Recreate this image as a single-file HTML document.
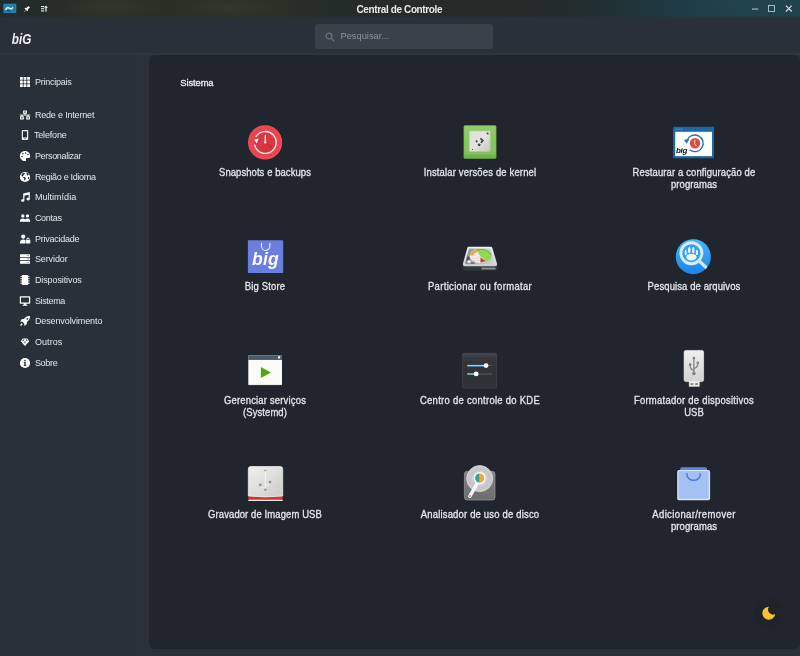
<!DOCTYPE html>
<html lang="pt-BR">
<head>
<meta charset="utf-8">
<title>Central de Controle</title>
<style>
*{box-sizing:border-box;margin:0;padding:0}
html,body{width:800px;height:656px;overflow:hidden;background:#29303a}
body{position:relative;font-family:"Liberation Sans",sans-serif;color:#e6e8ec;-webkit-font-smoothing:antialiased}
.abs{position:absolute}
#titlebar{left:0;top:0;width:800px;height:18px;
 background:
  radial-gradient(ellipse 60px 13px at 110px 7px,rgba(62,70,46,.36),rgba(62,70,46,0) 100%),
  radial-gradient(ellipse 65px 13px at 230px 7px,rgba(62,70,46,.36),rgba(62,70,46,0) 100%),
  linear-gradient(90deg,#1f2c2b 0px,#252c28 45px,#292e27 80px,#2a2f27 280px,#232b29 340px,#252b28 470px,#232b2a 560px,#203237 620px,#1f3c45 680px,#1f424d 740px,#20444f 800px);}
#titlebar:after{content:"";position:absolute;left:0;right:0;bottom:0;height:3px;background:linear-gradient(180deg,rgba(41,48,58,0),rgba(41,48,58,.85))}
#title{left:-.7px;width:800px;top:2.700px;height:14px;line-height:14px;text-align:center;font-weight:bold;font-size:10px;letter-spacing:-.37px;color:#e9ebe8}
#header{left:0;top:18px;width:800px;height:37px;background:#29303a;border-bottom:2px solid #2f343f}
#search{left:315px;top:24px;width:178.300px;height:25px;background:#3a414b;border-radius:3px}
#search span{position:absolute;left:25.500px;top:0;line-height:25px;font-size:9.3px;color:#8d939e}
#sidebar{left:0;top:55px;width:800px;height:601px;background:#29303a}
.nav{position:absolute;left:0;width:148px;height:14px;line-height:14px;font-size:9px;letter-spacing:-.3px;color:#e4e7ec;white-space:nowrap}
.nav svg{position:absolute;left:19px;top:1px;width:12px;height:12px;fill:#fff}
.nav span{position:absolute;left:35px;top:0}
#main{left:149px;top:55px;width:651px;height:594px;background:#21252d;border-radius:6px 7px 7px 6px}
#h1{left:180.300px;top:75.800px;height:14px;line-height:14px;font-size:9.400px;color:#eceef2;letter-spacing:-.1px;-webkit-text-stroke:.3px #eceef2}
.lbl{position:absolute;width:214px;text-align:center;font-size:10.300px;line-height:12px;color:#e3e6ea;-webkit-text-stroke:.3px #e3e6ea;transform:scaleX(.92);transform-origin:50% 50%;white-space:nowrap}
.ico{position:absolute}
</style>
</head>
<body>
<div id="root" class="abs" style="left:0;top:0;width:800px;height:656px;will-change:transform;transform:translateZ(0)">
<div id="titlebar" class="abs"></div>
<div id="title" class="abs">Central de Controle</div>

<!-- titlebar icons -->
<svg class="abs" style="left:0;top:0" width="60" height="18" viewBox="0 0 60 18">
 <rect x="3.800" y="4" width="12.200" height="8.800" fill="#2780ab"/>
 <rect x="3.800" y="4" width="12.200" height="8.800" fill="none" stroke="#2f93bd" stroke-width=".6" opacity=".8"/>
 <path d="M10.500 6.500h4.500v4.500h-3.500z" fill="#1f6f9c" opacity=".8"/>
 <path d="M5.800 9.300Q7.500 6.800 9.600 8.300T12.600 7.600" stroke="#eaf6fb" stroke-width="1.500" fill="none" opacity=".9" stroke-linecap="round"/>
 <path d="M6.800 10.700h3.600" stroke="#123f5c" stroke-width="1.100"/>
 <g fill="#f2f2f2" transform="translate(27.300 9) scale(.86) translate(-27.300 -8)"><path d="M28.600 4.600l2 2-1 .3-1.600 1.600.1 1.400-.7.700-1.500-1.500-2 2.300-.3-.3 2-2.300-1.500-1.500.7-.7 1.400.1 1.600-1.600z"/></g>
 <g fill="#e9e9e9"><rect x="41" y="6" width="3.200" height="1.100"/><rect x="41" y="8.200" width="3.200" height="1.100"/><rect x="41" y="10.400" width="3.200" height="1.100"/><path d="M46 5.600l2 2.200h-1.400v4h-1.200v-4H44z"/></g>
</svg>
<svg class="abs" style="left:740px;top:0" width="60" height="18" viewBox="0 0 60 18">
 <rect x="12" y="8.500" width="6" height="1.100" fill="#a9c0c8"/>
 <rect x="28.500" y="5.500" width="6" height="6" fill="none" stroke="#a3bbc3" stroke-width="1"/>
 <path d="M45.900 5.700l5.800 5.800M51.700 5.700l-5.800 5.800" stroke="#d8e3e6" stroke-width="1.100"/>
</svg>

<div id="header" class="abs"></div>
<svg class="abs" style="left:10px;top:28px" width="26" height="22" viewBox="0 0 26 22"><text x="1.800" y="16.300" font-family="Liberation Sans, sans-serif" font-size="14.500" font-weight="bold" font-style="italic" fill="#f1f1f4" textLength="19.500" lengthAdjust="spacingAndGlyphs">biG</text></svg>
<div id="search" class="abs">
 <svg style="position:absolute;left:10px;top:7.5px" width="10" height="10" viewBox="0 0 10 10"><circle cx="4" cy="4" r="2.9" fill="none" stroke="#68707d" stroke-width="1.2"/><path d="M6.2 6.2L8.8 8.8" stroke="#68707d" stroke-width="1.400" stroke-linecap="round"/></svg>
 <span>Pesquisar...</span>
</div>

<div id="sidebar" class="abs"></div>
<div class="abs" style="left:138px;top:55px;width:11px;height:601px;background:#2c303b"></div>
<div id="main" class="abs"></div>
<div id="h1" class="abs">Sistema</div>

<div class="nav" style="top:74.70px"><svg viewBox="0 0 12 12"><g><rect x="1.0" y="1.0" width="2.8" height="2.8" rx=".3"/><rect x="4.6" y="1.0" width="2.8" height="2.8" rx=".3"/><rect x="8.2" y="1.0" width="2.8" height="2.8" rx=".3"/><rect x="1.0" y="4.6" width="2.8" height="2.8" rx=".3"/><rect x="4.6" y="4.6" width="2.8" height="2.8" rx=".3"/><rect x="8.2" y="4.6" width="2.8" height="2.8" rx=".3"/><rect x="1.0" y="8.2" width="2.8" height="2.8" rx=".3"/><rect x="4.6" y="8.2" width="2.8" height="2.8" rx=".3"/><rect x="8.2" y="8.2" width="2.8" height="2.8" rx=".3"/></g></svg><span style="left:35.1px;letter-spacing:-0.25px">Principais</span></div>
<div class="nav" style="top:107.60px"><svg viewBox="0 0 12 12"><rect x="4.100" y="1.500" width="3.800" height="3.300" rx=".5"/><rect x="5.200" y="2.500" width="1.600" height="1.100" fill="#29303a"/><rect x="1" y="7.300" width="3.800" height="3.300" rx=".5"/><rect x="2.100" y="8.300" width="1.600" height="1.100" fill="#29303a"/><rect x="7.200" y="7.300" width="3.800" height="3.300" rx=".5"/><rect x="8.300" y="8.300" width="1.600" height="1.100" fill="#29303a"/><rect x="5.550" y="4.600" width=".9" height="1.600"/><rect x=".8" y="5.600" width="10.400" height=".9"/><rect x="2.450" y="6" width=".9" height="1.500"/><rect x="8.650" y="6" width=".9" height="1.500"/></svg><span style="left:34.9px;letter-spacing:-0.18px">Rede e Internet</span></div>
<div class="nav" style="top:128.25px"><svg viewBox="0 0 12 12"><path fill-rule="evenodd" d="M3.8 1h4.4a1 1 0 0 1 1 1v8a1 1 0 0 1-1 1H3.8a1 1 0 0 1-1-1V2a1 1 0 0 1 1-1zM3.9 2.2v6.3h4.2V2.2zM6 9.1a.6.6 0 1 0 0 1.2.6.6 0 0 0 0-1.2z"/></svg><span style="left:33.9px;letter-spacing:-0.16px">Telefone</span></div>
<div class="nav" style="top:148.90px"><svg viewBox="0 0 12 12"><path fill-rule="evenodd" d="M6 1C3.1 1 .9 3.200.9 6s2.300 5.100 5.100 5.100c.9 0 1.300-.7 1-1.400-.4-.9.1-1.700 1.100-1.700h1.400c1 0 1.700-.8 1.700-1.800C11.200 3.200 8.900 1 6 1zM3 7.300a.8.800 0 1 1 0-1.600.8.800 0 0 1 0 1.600zM3.900 4.600a.8.800 0 1 1 0-1.600.8.800 0 0 1 0 1.600zM6.600 3.800a.8.800 0 1 1 0-1.600.8.800 0 0 1 0 1.600zM9 5.300a.8.800 0 1 1 0-1.600.8.800 0 0 1 0 1.600z"/></svg><span style="left:34.9px;letter-spacing:-0.31px">Personalizar</span></div>
<div class="nav" style="top:169.60px"><svg viewBox="0 0 12 12"><circle cx="6" cy="6" r="5.1"/><path fill="#29303a" d="M3.300 2.400l1.500-.7 1.200.4-.4.900-1 .4.300.8-.9.600-.2 1 1 .3 1.300.2.800.9-.5 1.200-.9 1.100-.5-1.300-.2-1.300-1-.7-.6-1.200-.8-.3.300-1.300zM7.800 1.600l1.400.9.900 1.200-.9.100-.4.800-.9-.3.200-.9-.7-.5zM9.200 6l1.100.2-.2 1.300-.9 1-.3-1.100z"/></svg><span style="left:34.9px;letter-spacing:-0.32px">Região e Idioma</span></div>
<div class="nav" style="top:190.25px"><svg viewBox="0 0 12 12"><path d="M4.200 2.600L10.800 1v7.100a1.700 1.300 0 1 1-1.200-1.250V3.700L5.400 4.800v4.700a1.700 1.300 0 1 1-1.200-1.250z"/></svg><span style="left:34.9px;letter-spacing:0.03px">Multimídia</span></div>
<div class="nav" style="top:210.90px"><svg viewBox="0 0 12 12"><circle cx="3.800" cy="3.900" r="1.700"/><circle cx="8.500" cy="3.900" r="1.700"/><path d="M.9 9.400c0-1.700 1-2.900 2.900-2.900 1 0 1.800.4 2.300 1 .5-.6 1.300-1 2.400-1 1.800 0 2.700 1.200 2.700 2.900v.3H.9z"/></svg><span style="left:34.9px;letter-spacing:-0.27px">Contas</span></div>
<div class="nav" style="top:231.55px"><svg viewBox="0 0 12 12"><circle cx="4.200" cy="3.600" r="2.100"/><path d="M.8 10.200c0-2.200 1.200-3.800 3.400-3.800.9 0 1.600.3 2.100.7v3.400H.8z"/><path fill-rule="evenodd" d="M7.100 6.900h.4v-.8a1.500 1.500 0 0 1 3 0v.8h.4a.4.400 0 0 1 .4.400v2.800a.4.400 0 0 1-.4.400H7.100a.4.400 0 0 1-.4-.4V7.300a.4.400 0 0 1 .4-.4zM8.300 6.900h1.400v-.8a.7.700 0 0 0-1.400 0z"/></svg><span style="left:34.9px;letter-spacing:-0.25px">Privacidade</span></div>
<div class="nav" style="top:252.20px"><svg viewBox="0 0 12 12"><rect x="1" y="1.300" width="10" height="2.700" rx=".5"/><rect x="1" y="4.650" width="10" height="2.700" rx=".5"/><rect x="1" y="8" width="10" height="2.700" rx=".5"/><g fill="#29303a"><circle cx="9.500" cy="2.650" r=".45"/><circle cx="8.100" cy="2.650" r=".45"/><circle cx="9.500" cy="6" r=".45"/><circle cx="8.100" cy="6" r=".45"/><circle cx="9.500" cy="9.350" r=".45"/><circle cx="8.100" cy="9.350" r=".45"/></g></svg><span style="left:34.9px;letter-spacing:-0.10px">Servidor</span></div>
<div class="nav" style="top:272.85px"><svg viewBox="0 0 12 12"><rect x="2.900" y=".9" width="6.200" height="10.200" rx="1"/><g><rect x="1.500" y="2.200" width="1.800" height=".8"/><rect x="1.500" y="4" width="1.800" height=".8"/><rect x="1.500" y="5.800" width="1.800" height=".8"/><rect x="1.500" y="7.600" width="1.800" height=".8"/><rect x="1.500" y="9.200" width="1.800" height=".8"/><rect x="8.700" y="2.200" width="1.800" height=".8"/><rect x="8.700" y="4" width="1.800" height=".8"/><rect x="8.700" y="5.800" width="1.800" height=".8"/><rect x="8.700" y="7.600" width="1.800" height=".8"/><rect x="8.700" y="9.200" width="1.800" height=".8"/></g></svg><span style="left:34.9px;letter-spacing:-0.10px">Dispositivos</span></div>
<div class="nav" style="top:293.50px"><svg viewBox="0 0 12 12"><path fill-rule="evenodd" d="M1.600 1.300h8.800a.8.800 0 0 1 .8.800v5.900a.8.800 0 0 1-.8.800H7.200l.3 1.200h.9v.8H3.600v-.8h.9l.3-1.200H1.600a.8.800 0 0 1-.8-.8V2.100a.8.800 0 0 1 .8-.8zM2 2.500v4.900h8V2.500z"/></svg><span style="left:34.9px;letter-spacing:-0.35px">Sistema</span></div>
<div class="nav" style="top:314.45px"><svg viewBox="0 0 12 12"><path d="M10.900 1.100c-2.500-.3-4.600.9-5.900 3H2.900L1.100 6.500l2.300.3 1.800 1.800.3 2.300 2.400-1.800V7c2.100-1.300 3.300-3.400 3-5.900zM8.300 4.700a.9.900 0 1 1 0-1.800.9.900 0 0 1 0 1.800zM1.300 10.700c0-1.200.5-2.200 1.500-2.400l.9.900c-.2 1-1.200 1.500-2.400 1.500z"/></svg><span style="left:34.9px;letter-spacing:-0.11px">Desenvolvimento</span></div>
<div class="nav" style="top:335.30px"><svg viewBox="0 0 12 12"><path fill-rule="evenodd" d="M3.800 2.600h4.400L10.300 5.200 6 9.900 1.700 5.200zM4.200 3.400L3.300 4.800h1.500l.6-1.400zM6.600 3.400l.6 1.400h1.500L7.800 3.400zM5.300 5.500L6 8l.7-2.500z"/></svg><span style="left:34.9px;letter-spacing:0.08px">Outros</span></div>
<div class="nav" style="top:356.10px"><svg viewBox="0 0 12 12"><circle cx="6" cy="6" r="5.100"/><g fill="#29303a"><circle cx="6" cy="3.500" r=".85"/><path d="M4.800 5.100h1.900v3.100h.6v.9H4.700v-.9h.6V6h-.5z"/></g></svg><span style="left:34.9px;letter-spacing:-0.28px">Sobre</span></div>

<svg class="ico" style="left:241.3px;top:118.0px" width="48" height="48" viewBox="0 0 48 48"><g transform="translate(.1 .4)"><circle cx="24" cy="24" r="17.100" fill="#ee4d58"/>
<circle cx="24" cy="24" r="15.600" fill="#e9454f"/>
<circle cx="24.200" cy="24" r="10.900" fill="#d93842"/>
<path d="M24.200 24L32.800 30.500A10.900 10.900 0 0 1 17 32.200z" fill="#cf303a" opacity=".6"/>
<path d="M14.600 18.800A10.900 10.900 0 1 1 13.500 26.200" fill="none" stroke="#fbe9ea" stroke-width="1.400"/>
<path d="M13.200 21.300l4.400-1.300-1.900 5.200z" fill="#fff"/>
<path d="M24.200 24.300V17.300" stroke="#fff" stroke-width="1.300" stroke-linecap="round"/>
<path d="M24.200 24l6.200 4.800" stroke="#c22a35" stroke-width="1.200" stroke-linecap="round"/>
<circle cx="24.200" cy="24.100" r="1.100" fill="#fff"/></g></svg>
<div class="lbl" style="left:158.3px;top:166.50px"><span style="letter-spacing:0.08px">Snapshots e backups</span></div>
<svg class="ico" style="left:455.5px;top:118.0px" width="48" height="48" viewBox="0 0 48 48"><defs><linearGradient id="gk1" x1="0" y1="0" x2="0" y2="1"><stop offset="0" stop-color="#8fcd69"/><stop offset=".85" stop-color="#7fc45a"/><stop offset="1" stop-color="#63a842"/></linearGradient><linearGradient id="gk2" x1="0" y1="0" x2="1" y2="1"><stop offset="0" stop-color="#dfe1dc"/><stop offset=".5" stop-color="#e6e2e2"/><stop offset="1" stop-color="#c3c7c0"/></linearGradient></defs>
<rect x="7.900" y="7.600" width="32.200" height="32.900" rx="1.200" fill="url(#gk1)" stroke="#6bb048" stroke-width=".6"/>
<rect x="9" y="36.800" width="30" height="2.900" fill="#6cb348" opacity=".7"/>
<rect x="13.200" y="12.900" width="21" height="20.800" rx=".8" fill="url(#gk2)" stroke="#a3cf8d" stroke-width=".8"/>
<g fill="#3b4a3e"><path d="M24.800 19.800l3.300 2.700-2.600 2.800-1.300-1 1.500-1.800-1.900-1.600z"/><circle cx="20.700" cy="23.300" r="1.100"/><circle cx="23.200" cy="26.800" r="1.400"/><circle cx="31.600" cy="15.500" r="1.100"/><circle cx="16.500" cy="31.500" r=".6"/></g></svg>
<div class="lbl" style="left:372.5px;top:166.50px"><span style="letter-spacing:0.17px">Instalar versões de kernel</span></div>
<svg class="ico" style="left:669.6px;top:118.0px" width="48" height="48" viewBox="0 0 48 48"><g transform="translate(-.6 .4)"><rect x="3.600" y="8.300" width="41" height="31.600" rx="1" fill="#1a69a4"/>
<rect x="5.800" y="13.400" width="36.800" height="24.300" fill="#fdfdfd"/>
<g fill="#4f9bd2"><circle cx="7" cy="10.800" r=".8"/><circle cx="9.600" cy="10.800" r=".8"/><circle cx="12.200" cy="10.800" r=".8"/></g>
<path d="M17.600 22.400A8.300 8.300 0 1 1 20.200 31.300" fill="none" stroke="#2a6cb0" stroke-width="1.300"/>
<path d="M14.600 21.300l5.400-.6-2.800 4.700z" fill="#2a6cb0"/>
<circle cx="25.600" cy="24.800" r="5.200" fill="#da4d3e"/>
<path d="M25.300 21.800v3.300l1.600 2.300" fill="none" stroke="#fbe3df" stroke-width=".9" stroke-linecap="round"/>
<text x="6.600" y="34.800" font-family="Liberation Sans, sans-serif" font-size="8" font-weight="bold" font-style="italic" fill="#111" letter-spacing="-.3">big</text></g></svg>
<div class="lbl" style="left:586.6px;top:166.50px"><span style="letter-spacing:0.13px">Restaurar a configuração de</span><br><span style="letter-spacing:0.11px">programas</span></div>
<svg class="ico" style="left:241.3px;top:231.9px" width="48" height="48" viewBox="0 0 48 48"><rect x="6.900" y="8.200" width="35.300" height="32.800" rx=".8" fill="#6a7edd"/>
<path d="M20.500 11.200v3a4.200 4.200 0 0 0 8.400 0v-3" fill="none" stroke="#f3f5ff" stroke-width="1.050" stroke-linecap="round"/>
<text x="24.500" y="33.300" text-anchor="middle" font-family="Liberation Sans, sans-serif" font-size="17.500" font-weight="bold" font-style="italic" fill="#fbfbff" letter-spacing=".2">big</text></svg>
<div class="lbl" style="left:158.3px;top:280.50px"><span style="letter-spacing:0.18px">Big Store</span></div>
<svg class="ico" style="left:455.5px;top:231.9px" width="48" height="48" viewBox="0 0 48 48"><defs><linearGradient id="gp1" x1="0" y1="0" x2="0" y2="1"><stop offset="0" stop-color="#f4f4f4"/><stop offset="1" stop-color="#d0d0d0"/></linearGradient><linearGradient id="gp2" x1="0" y1="0" x2="1" y2="0"><stop offset="0" stop-color="#85888b"/><stop offset=".35" stop-color="#b4b7ba"/><stop offset="1" stop-color="#d2d5d8"/></linearGradient></defs>
<path d="M7 33.200h34.400v4.200a1.400 1.400 0 0 1-1.400 1.400H8.400a1.400 1.400 0 0 1-1.400-1.400z" fill="#33363b"/>
<rect x="25.500" y="35.600" width="14" height="1.800" fill="#92959b"/>
<path d="M12.900 14.800h21.700a1.800 1.800 0 0 1 1.800 1.400l4.700 15.600a2 2 0 0 1-2 2.500H8.900a2 2 0 0 1-2-2.500l4.300-15.600a1.800 1.800 0 0 1 1.700-1.400z" fill="url(#gp1)"/>
<path d="M14 16.400h19.600a1.300 1.300 0 0 1 1.300 1l3.700 13a1.500 1.500 0 0 1-1.500 1.900H10.800a1.500 1.500 0 0 1-1.500-1.900l3.400-13a1.300 1.300 0 0 1 1.300-1z" fill="url(#gp2)"/>
<path d="M11.200 24.500h2.500v4.800h-3.300z" fill="#55585b"/>
<ellipse cx="24.6" cy="24.2" rx="11.1" ry="7.2" fill="#b9bcbf"/>
<path d="M24.60 24.50L13.96 23.49A10.7 6.8 0 0 1 20.42 17.94z" fill="#f3eeee"/>
<path d="M13.96 23.49A10.7 6.8 0 0 1 20.42 17.94L21.59 19.69A7.70 4.90 0 0 0 16.94 23.69z" fill="#f0a230"/>
<path d="M24.60 24.50L20.42 17.94A10.7 6.8 0 0 1 31.19 29.56z" fill="#8ddc4c"/>
<path d="M20.42 17.94A10.7 6.8 0 0 1 35.14 23.02" fill="none" stroke="#5c9c34" stroke-width=".7"/>
<path d="M24.60 24.50L13.96 23.49A10.7 6.8 0 0 0 24.60 31.00z" fill="#f4efef"/>
<path d="M24.60 24.50L24.60 31.00A10.7 6.8 0 0 0 31.19 29.56z" fill="#dcdfdd"/>
<path d="M24.500 25.400l5.600 3.900-5.600 1.300z" fill="#de3838"/>
<path d="M15.500 26.600l8.400-.6M16.500 28.600l7.400-.4" stroke="#ecc6c6" stroke-width=".8"/>
<path d="M15 31h3.600" stroke="#3c3f42" stroke-width=".9"/>
<ellipse cx="13" cy="29.500" rx="1.700" ry="1.200" fill="#fff"/></svg>
<div class="lbl" style="left:372.5px;top:280.50px"><span style="letter-spacing:0.37px">Particionar ou formatar</span></div>
<svg class="ico" style="left:669.6px;top:231.9px" width="48" height="48" viewBox="0 0 48 48"><defs><linearGradient id="gf1" x1="0" y1="0" x2="0" y2="1"><stop offset="0" stop-color="#48b5f9"/><stop offset="1" stop-color="#1a84ea"/></linearGradient></defs>
<g transform="translate(-.7 .7)"><circle cx="24" cy="24" r="17.500" fill="url(#gf1)"/>
<path d="M30 28.300L36.300 34.300" stroke="#cfe7fb" stroke-width="3.200" stroke-linecap="round"/>
<circle cx="22.100" cy="20.500" r="10.500" fill="#32a3ee" stroke="#d8edfc" stroke-width="2.900"/>
<g fill="#f1f9fe"><ellipse cx="22.100" cy="24.400" rx="5.200" ry="3.300"/><ellipse cx="16.400" cy="19.700" rx="1.100" ry="2.700"/><ellipse cx="20" cy="17.400" rx="1.200" ry="3.200"/><ellipse cx="24" cy="17.400" rx="1.200" ry="3.200"/><ellipse cx="27.600" cy="19.700" rx="1.100" ry="2.700"/></g></g></svg>
<div class="lbl" style="left:586.6px;top:280.50px"><span style="letter-spacing:0.12px">Pesquisa de arquivos</span></div>
<svg class="ico" style="left:241.3px;top:345.8px" width="48" height="48" viewBox="0 0 48 48"><rect x="7.300" y="9.300" width="33.700" height="29.800" rx=".8" fill="#fbfbfa"/>
<path d="M8.100 9.300h32.100a.8.800 0 0 1 .8.800v3.300H7.300V10.100a.8.800 0 0 1 .8-.8z" fill="#4c5b67"/>
<rect x="7.300" y="13.300" width="33.700" height=".7" fill="#3a4651"/>
<rect x="37" y="10.300" width="2.200" height="2.200" rx=".4" fill="#fff"/>
<path d="M19.900 20.900l10 5.600-10 5.600z" fill="#4fa810"/>
<rect x="7.300" y="38.400" width="33.700" height=".7" fill="#dcdcda"/></svg>
<div class="lbl" style="left:158.3px;top:394.50px"><span style="letter-spacing:0.19px">Gerenciar serviços</span><br><span style="letter-spacing:0.10px">(Systemd)</span></div>
<svg class="ico" style="left:455.5px;top:345.8px" width="48" height="48" viewBox="0 0 48 48"><defs><linearGradient id="gc1" x1="0" y1="0" x2="0" y2="1"><stop offset="0" stop-color="#494c53"/><stop offset=".1" stop-color="#393b42"/><stop offset=".3" stop-color="#313339"/><stop offset="1" stop-color="#2f3137"/></linearGradient></defs>
<rect x="6.600" y="7.300" width="34.100" height="34.800" rx="1.300" fill="url(#gc1)"/>
<rect x="6.600" y="7.300" width="34.100" height="34.800" rx="1.300" fill="none" stroke="#484c54" stroke-width=".6"/>
<rect x="11" y="19" width="25" height="1.100" rx=".5" fill="#565a62"/>
<rect x="11" y="18.400" width="19" height="2.600" rx="1.300" fill="#2a6c9c" opacity=".7"/>
<rect x="11" y="18.900" width="19" height="1.400" rx=".7" fill="#a5cde8"/>
<circle cx="30" cy="19.600" r="2.400" fill="#fff"/>
<rect x="11" y="27.400" width="25" height="1.100" rx=".5" fill="#565a62"/>
<rect x="11" y="27.200" width="9" height="1.500" rx=".7" fill="#8cc8c2"/>
<circle cx="20.200" cy="27.950" r="2.400" fill="#fff"/></svg>
<div class="lbl" style="left:372.5px;top:394.50px"><span style="letter-spacing:0.30px">Centro de controle do KDE</span></div>
<svg class="ico" style="left:669.6px;top:345.8px" width="48" height="48" viewBox="0 0 48 48"><defs><linearGradient id="gu1" x1="0" y1="0" x2="0" y2="1"><stop offset="0" stop-color="#efefef"/><stop offset="1" stop-color="#d2d2d2"/></linearGradient></defs>
<rect x="17.800" y="35" width="12.800" height="6.200" fill="#3a3d44"/>
<rect x="19.100" y="35" width="10.400" height="5.600" fill="#ececec"/>
<rect x="20.600" y="37.300" width="2.700" height="1.500" fill="#6f6f6f"/><rect x="25.200" y="37.300" width="2.700" height="1.500" fill="#6f6f6f"/>
<rect x="14.100" y="4.400" width="19.500" height="31.200" rx="1.800" fill="url(#gu1)" stroke="#f6f6f6" stroke-width=".6"/>
<g fill="none" stroke="#7d7d7d" stroke-width="1.200"><path d="M23.900 13v14"/><path d="M23.900 24.500c-3-.8-3.800-2-3.800-5.200"/><path d="M23.900 22.500c3-.8 3.900-1.800 3.900-4.700"/></g>
<circle cx="23.900" cy="27.600" r="1.700" fill="#7d7d7d"/><circle cx="23.900" cy="12" r="1.300" fill="#7d7d7d"/><circle cx="20.100" cy="18.600" r="1.300" fill="#7d7d7d"/><circle cx="27.800" cy="16.700" r="1.300" fill="#7d7d7d"/></svg>
<div class="lbl" style="left:586.6px;top:394.50px"><span style="letter-spacing:0.27px">Formatador de dispositivos</span><br><span style="letter-spacing:0.06px">USB</span></div>
<svg class="ico" style="left:241.3px;top:459.7px" width="48" height="48" viewBox="0 0 48 48"><defs><linearGradient id="gi1" x1="0" y1="0" x2="1" y2="1"><stop offset="0" stop-color="#efefee"/><stop offset=".5" stop-color="#dededc"/><stop offset="1" stop-color="#cbcbc9"/></linearGradient></defs>
<path d="M7.300 30h34.400v9a1.500 1.500 0 0 1-1.500 1.500H8.800a1.500 1.500 0 0 1-1.500-1.500z" fill="#d6342c"/>
<path d="M9.800 6.500h29.400a2.500 2.500 0 0 1 2.500 2.500v27q-17.200 1.800-34.400 0V9a2.500 2.500 0 0 1 2.500-2.500z" fill="url(#gi1)" stroke="#f4f4f3" stroke-width=".7"/>
<rect x="7.300" y="39.700" width="34.400" height="1.300" rx=".6" fill="#f0eeee"/>
<g stroke="#f8f8f8" stroke-width=".8" fill="none"><path d="M24.300 11v18.500"/><path d="M24.300 28.500c-3.400-1-4.800-1.600-5-3.300"/><path d="M24.300 25.900c3.400-1 4.500-1.600 4.700-3.600"/></g>
<g fill="#8e8e8c"><rect x="23.200" y="9.700" width="2.200" height="1.500" rx=".5" fill="#a4a4a2"/><circle cx="19.300" cy="24.900" r="1.300"/><circle cx="29" cy="22.100" r="1.300"/><circle cx="24.300" cy="29.600" r="1.200"/></g></svg>
<div class="lbl" style="left:158.3px;top:508.50px"><span style="letter-spacing:0.11px">Gravador de Imagem USB</span></div>
<svg class="ico" style="left:455.5px;top:459.7px" width="48" height="48" viewBox="0 0 48 48"><defs><linearGradient id="gb1" x1="0" y1="0" x2="0" y2="1"><stop offset="0" stop-color="#828282"/><stop offset="1" stop-color="#6d6d6d"/></linearGradient></defs>
<rect x="8.400" y="11.300" width="30.600" height="28.700" rx="2.800" fill="url(#gb1)"/>
<rect x="8.400" y="11.300" width="30.600" height="28.700" rx="2.800" fill="none" stroke="#9a9a9a" stroke-width=".7"/>
<circle cx="23.700" cy="18.600" r="13" fill="#c9c9cc"/>
<circle cx="23.700" cy="18.600" r="13" fill="none" stroke="#dedee0" stroke-width=".8"/>
<circle cx="23.700" cy="18.600" r="9.500" fill="none" stroke="#c3c3c5" stroke-width="1"/>
<circle cx="23.700" cy="18.600" r="7.500" fill="#d2d2d5"/>
<path d="M21.600 22.600L13.800 36.300" stroke="#fbfbfb" stroke-width="3.400" stroke-linecap="round"/>
<circle cx="14" cy="35.900" r="1" fill="#9b9b9b"/>
<circle cx="23.700" cy="18.100" r="6.100" fill="#f4fbf8"/>
<path d="M23.700 13.500a4.600 4.600 0 0 0 0 9.200z" fill="#35a08f"/>
<path d="M23.700 13.500a4.600 4.600 0 0 1 0 9.200z" fill="#f2a444"/></svg>
<div class="lbl" style="left:372.5px;top:508.50px"><span style="letter-spacing:0.20px">Analisador de uso de disco</span></div>
<svg class="ico" style="left:669.6px;top:459.7px" width="48" height="48" viewBox="0 0 48 48"><path d="M11.900 7.200h23.400a1.800 1.800 0 0 1 1.800 1.800v2.500H10.100V9a1.800 1.800 0 0 1 1.800-1.800z" fill="#5c86e6"/>
<rect x="7.200" y="10.100" width="32.900" height="30.100" rx="1.900" fill="#dde6fa"/>
<rect x="8.600" y="10.900" width="30.100" height="27.900" rx="1" fill="#a5c1f3"/>
<path d="M16.900 13.800v.7a6.700 5.800 0 0 0 13.400 0v-.7" fill="none" stroke="#4f7be0" stroke-width="1.600" stroke-linecap="round"/></svg>
<div class="lbl" style="left:586.6px;top:508.50px"><span style="letter-spacing:0.42px">Adicionar/remover</span><br><span style="letter-spacing:0.11px">programas</span></div>
<svg class="ico" style="left:760px;top:604px;overflow:visible" width="18" height="18" viewBox="0 0 18 18"><circle cx="8.800" cy="9" r="15" fill="#000" opacity=".05"/><path d="M9.010 2.750A6.500 6.500 0 1 0 15.260 9.950A4.900 4.900 0 0 1 9.010 2.750z" fill="#f7c32e"/></svg>

</div>
</body>
</html>
